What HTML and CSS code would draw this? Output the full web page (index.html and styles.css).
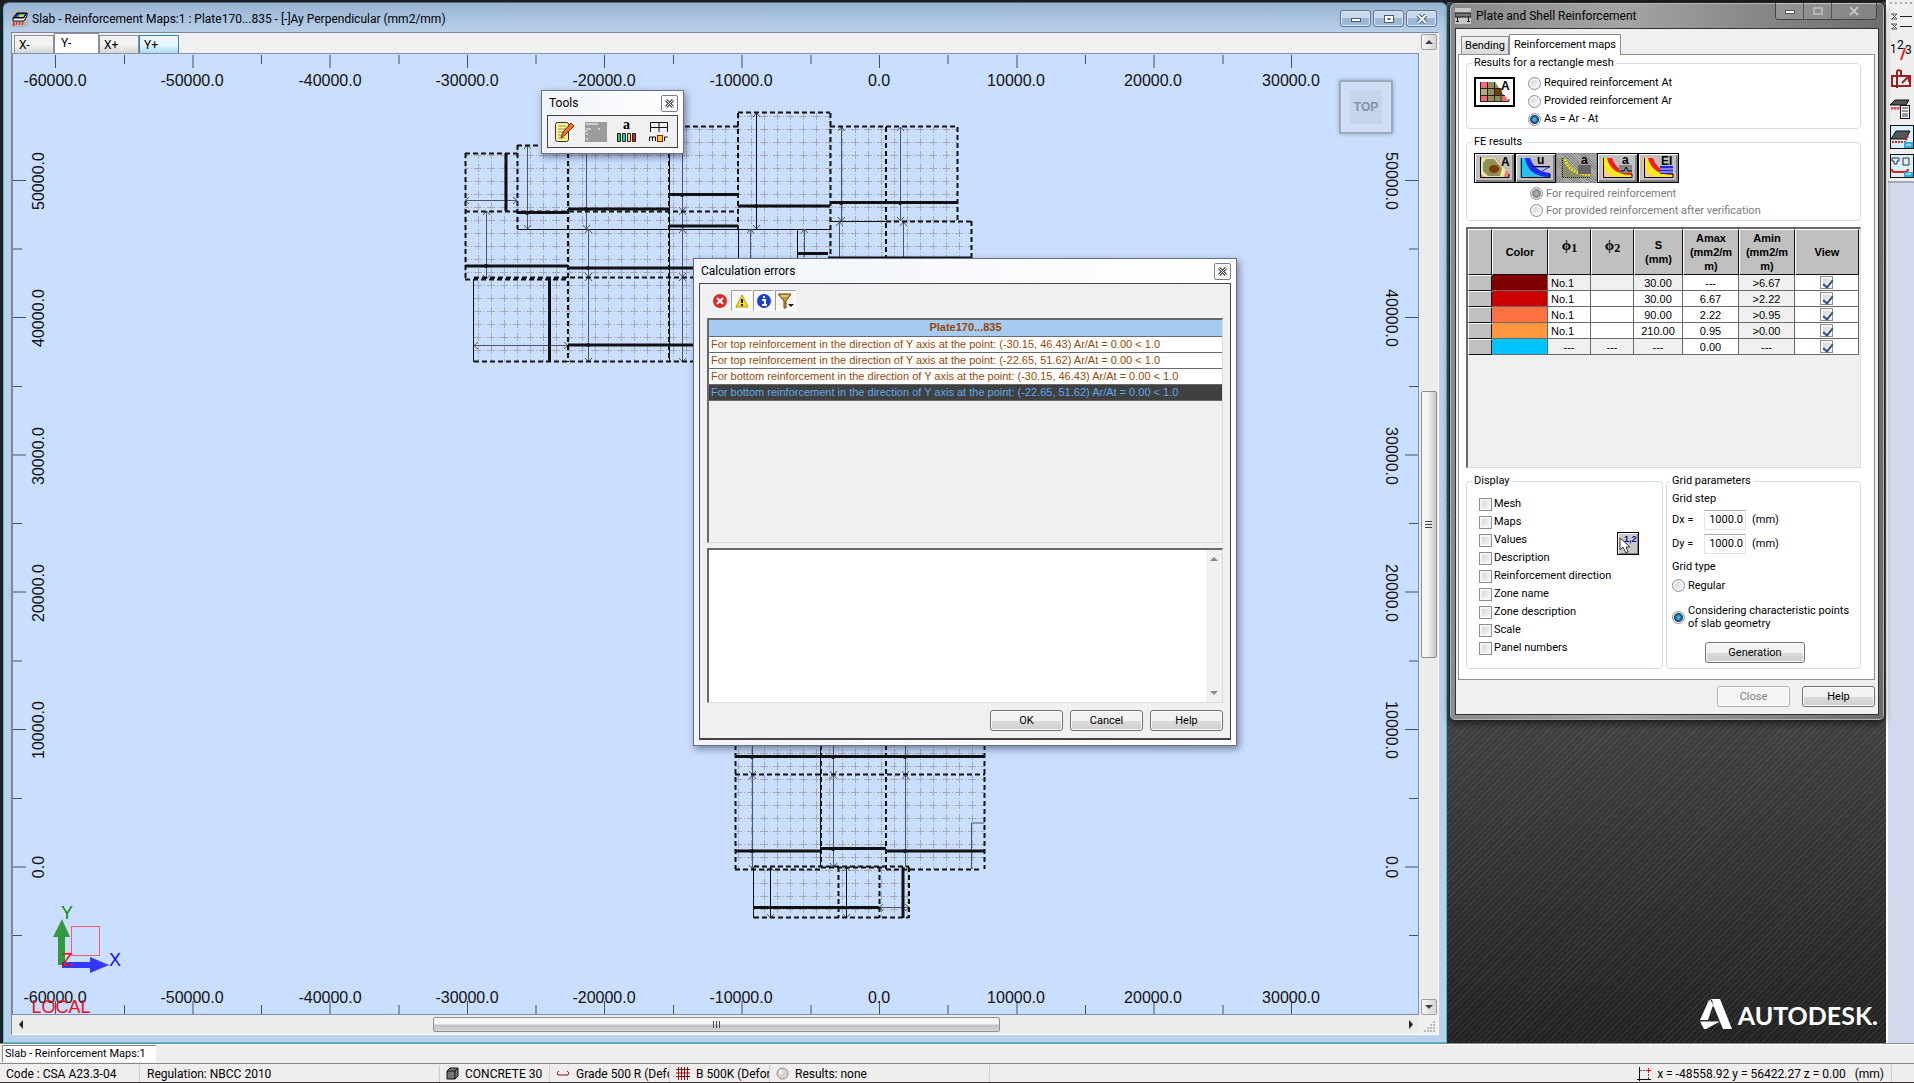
FILE: index.html
```html
<!DOCTYPE html>
<html lang="en">
<head>
<meta charset="utf-8">
<title>Slab - Reinforcement Maps</title>
<link rel="stylesheet" href="styles.css">
</head>
<body>
<main class="workspace">
  <section class="mdi" aria-label="Reinforcement map view">
    <header class="mdi-title">
      <svg class="mdi-icon" width="16" height="16" viewBox="0 0 16 16"><rect width="16" height="16" fill="#b9b4b4"/><path d="M5 2h10l-3 5H1z" fill="#2222e0" stroke="#000"/><path d="M7 3h6l-2 3H5z" fill="#1fd03a"/><path d="M8 4h4l-1 2H7z" fill="#f2e21e"/><path d="M1 7v3h11l3-5V2l-3 5z" fill="#fff" stroke="#000"/><path d="M2 11l-1 4M5 11l-1 3M8 11l-1 3M11 11l-1 3M3 13H1" stroke="#e01010"/></svg>
      <h1>Slab - Reinforcement Maps:1 : Plate170...835 - [-]Ay Perpendicular (mm2/mm)</h1>
      <div class="mdi-buttons">
        <button aria-label="Minimize"><svg width="12" height="10"><rect x="1.500" y="4.500" width="9" height="3" fill="#fff" stroke="#4a5a70"/></svg></button>
        <button aria-label="Maximize"><svg width="12" height="10"><rect x="1.500" y="1.500" width="9" height="7" fill="#fff" stroke="#4a5a70"/><rect x="4.500" y="4" width="3" height="2" fill="#4a5a70"/></svg></button>
        <button aria-label="Close view"><svg width="12" height="10"><path d="M2 1l8 8M10 1l-8 8" stroke="#4a5a70" stroke-width="4"/><path d="M2 1l8 8M10 1l-8 8" stroke="#fff" stroke-width="2"/></svg></button>
      </div>
    </header>
    <div class="mdi-body">
      <div class="view">
        <nav class="view-tabs">
          <button>X-</button><button class="active">Y-</button><button>X+</button><button class="hot">Y+</button>
        </nav>
        <div class="canvas">
          <svg class="drawing" width="100%" height="100%">
            <defs>
              <pattern id="mesh" width="13" height="13" patternUnits="userSpaceOnUse" x="4" y="6">
                <path d="M2 6.500h8M6.500 2v8M12 6.500h1M6.500 12v1" stroke="#a6a9b2" fill="none"/>
              </pattern>
            </defs>
            <g transform="translate(-13 -54)">
              <g fill="url(#mesh)">
                <path d="M465 153h52v-8h51v-18h170v-14h92v14h127v94h14v40H690v101H474v-83h-9z"/>
                <path d="M735 740h250v129h-76v49H754v-49h-19z"/>
              </g>
              <g class="thin">
                <path d="M517.500 229.500H830M669.500 140v222M473.500 279v83M738.500 229v30M797.500 229v30M820.500 745v122M753.500 867v51M830 221.500h56M756.500 113v116M770.500 867v51M846.500 867v51"/>
              </g>
              <g class="gray">
                <path d="M465 200.500h52M527.500 145v84M586.500 150v79M682.500 126v236M841.500 127v94M900.500 127v94M839.500 221v37M903.500 221v37M750.500 229v30M804.500 229v28M486.500 211v68M588.500 229v133M474 345.500h94M752.500 745v124M833.500 745v122M905.500 745v122M879 907.500h30M971.500 869v-46h13"/>
                <path d="M524 149l3.500-4 3.500 4M524 225l3.500 4 3.500-4M583 225l3.500 4 3.500-4M753 117l3.500-4 3.500 4M753 225l3.500 4 3.500-4M838 131l3.500-4 3.500 4M838 217l3.500 4 3.500-4M897 131l3.500-4 3.500 4M897 217l3.500 4 3.500-4M836 226l3.500-4 3.500 4M900 226l3.500-4 3.500 4M747 233l3.500-4 3.500 4M801 233l3.500-4 3.500 4M483 215l3.500-4 3.500 4M483 275l3.500 4 3.500-4M585 233l3.500-4 3.500 4M585 273l7 8M585 281l7-8M585 358l3.500 4 3.500-4M679 207l7 8M679 215l7-8M679 225l7 8M679 233l7-8M679 273l7 8M679 281l7-8M679 358l3.500 4 3.500-4M469 197l-4 3.500 4 3.500M513 197l4 3.500-4 3.500M478 342l-4 3.500 4 3.500M564 342l4 3.500-4 3.500M749 771l7 8M749 779l7-8M830 771l7 8M830 779l7-8M902 771l7 8M902 779l7-8M830 863l3.500 4 3.500-4M749 865l3.500 4 3.500-4M767 871l3.500-4 3.500 4M767 914l3.500 4 3.500-4M843 871l3.500-4 3.500 4M843 914l3.500 4 3.500-4M883 904l-4 3.500 4 3.500M905 904l4 3.500-4 3.500"/>
              </g>
              <g class="dashed">
                <path d="M465 153.500h52M465.500 153v126M517.500 145v84M517 145.500h51M568 145v217M465 211.500h273M465 279.500h103M474 277.500h219M474 361.500h219M669 145v217M669 126.500h69M738 113v116M738 112.500h92M830.500 113v145M830 126.500h127M957.500 127v94M886 127v131M886 221.500h85M971.500 221v37M735.500 745v124M735 869.500h86M984.500 745v124M886 745v124M735 774.500h250M821 867.500h65M886 869.500h95M754 866.500h155M754 917.500h155M838.500 867v51M879.500 867v51M909 867v51M821 745v122"/>
              </g>
              <g class="thick">
                <path d="M506 153v58M517 212.500h51M568 209h101M669 194.500h69M669 226h69M738 206h92M830 202.500h127M797 253.500h31M828 258h143M465 266h103M568 268h125M549.500 277v85M568 345h125M735 756.500h250M735 851h86M821 848.500h65M886 851h99M754 907.500h125M903 867v51"/>
              </g>
              <g class="dots">
                <circle cx="527" cy="213" r="2"/><circle cx="586" cy="209" r="2"/><circle cx="682" cy="195" r="2"/><circle cx="756" cy="206" r="2"/><circle cx="841" cy="203" r="2"/><circle cx="900" cy="203" r="2"/><circle cx="486" cy="266" r="2"/><circle cx="588" cy="268" r="2"/><circle cx="588" cy="345" r="2"/><circle cx="752" cy="757" r="2"/><circle cx="833" cy="757" r="2"/><circle cx="905" cy="757" r="2"/><circle cx="752" cy="851" r="2"/><circle cx="833" cy="849" r="2"/><circle cx="905" cy="851" r="2"/>
              </g>
            </g>
            <!-- top ruler -->
            <path class="tick" d="M42.500 1v13M180 1v13M317 1v13M454.500 1v13M591.500 1v13M729 1v13M866.500 1v13M1004 1v13M1141 1v13M1278.500 1v13M111.500 1v9M248.500 1v9M386 1v9M523 1v9M660.500 1v9M798 1v9M935 1v9M1072.500 1v9M1210 1v9"/>
            <g class="ruler">
              <text x="42" y="32">-60000.0</text><text x="179" y="32">-50000.0</text><text x="317" y="32">-40000.0</text><text x="454" y="32">-30000.0</text><text x="591" y="32">-20000.0</text><text x="728" y="32">-10000.0</text><text x="866" y="32">0.0</text><text x="1003" y="32">10000.0</text><text x="1140" y="32">20000.0</text><text x="1278" y="32">30000.0</text>
            </g>
            <!-- left ruler -->
            <path class="tick" d="M0 126.500h13M0 263.500h13M0 401h13M0 538h13M0 675.500h13M0 813h13M0 195h9M0 332.500h9M0 469.500h9M0 607h9M0 744.500h9M0 881.500h9"/>
            <g class="ruler">
              <text transform="translate(31 127) rotate(-90)">50000.0</text><text transform="translate(31 264) rotate(-90)">40000.0</text><text transform="translate(31 402) rotate(-90)">30000.0</text><text transform="translate(31 539) rotate(-90)">20000.0</text><text transform="translate(31 676) rotate(-90)">10000.0</text><text transform="translate(31 813) rotate(-90)">0.0</text>
            </g>
            <!-- right ruler -->
            <svg x="100%" overflow="visible">
              <path class="tick" d="M0 126.500h-13M0 263.500h-13M0 401h-13M0 538h-13M0 675.500h-13M0 813h-13M0 195h-9M0 332.500h-9M0 469.500h-9M0 607h-9M0 744.500h-9M0 881.500h-9"/>
              <g class="ruler">
                <text transform="translate(-32 127) rotate(90)">50000.0</text><text transform="translate(-32 264) rotate(90)">40000.0</text><text transform="translate(-32 402) rotate(90)">30000.0</text><text transform="translate(-32 539) rotate(90)">20000.0</text><text transform="translate(-32 676) rotate(90)">10000.0</text><text transform="translate(-32 813) rotate(90)">0.0</text>
              </g>
            </svg>
            <!-- bottom ruler and axes -->
            <svg y="100%" overflow="visible">
              <path class="tick" d="M42.500 0v-13M180 0v-13M317 0v-13M454.500 0v-13M591.500 0v-13M729 0v-13M866.500 0v-13M1004 0v-13M1141 0v-13M1278.500 0v-13M111.500 0v-9M248.500 0v-9M386 0v-9M523 0v-9M660.500 0v-9M798 0v-9M935 0v-9M1072.500 0v-9M1210 0v-9"/>
              <g class="ruler">
                <text x="42" y="-11">-60000.0</text><text x="179" y="-11">-50000.0</text><text x="317" y="-11">-40000.0</text><text x="454" y="-11">-30000.0</text><text x="591" y="-11">-20000.0</text><text x="728" y="-11">-10000.0</text><text x="866" y="-11">0.0</text><text x="1003" y="-11">10000.0</text><text x="1140" y="-11">20000.0</text><text x="1278" y="-11">30000.0</text>
              </g>
              <path d="M49-95l8 18h-5v28h-7v-28h-5z" fill="#329a3c"/>
              <path d="M49-52h28v-5l19 8-19 8v-5H49z" fill="#3238ff"/>
              <rect x="58.500" y="-87.500" width="28" height="29" fill="none" stroke="#ff5a6a"/>
              <g class="axis"><text x="54" y="-95" fill="#0a8a0a">Y</text><text x="102" y="-48" fill="#1010ff">X</text><text x="54" y="-48" fill="#ff0000">Z</text></g>
              <text class="local" x="48" y="-1">LOCAL</text>
            </svg>
          </svg>
          <button class="cube"><span>TOP</span></button>
        </div>
      </div>
      <div class="vscroll">
        <button aria-label="Scroll up"><svg width="8" height="6"><path d="M0 5l4-4 4 4z" fill="#444"/></svg></button>
        <div class="vthumb"><svg width="9" height="9"><path d="M1 1.500h7M1 4.500h7M1 7.500h7" stroke="#444"/></svg></div>
        <button aria-label="Scroll down"><svg width="8" height="6"><path d="M0 1l4 4 4-4z" fill="#444"/></svg></button>
      </div>
      <div class="hscroll">
        <svg width="16" height="9"><path d="M11 0v9L7 4.500z" fill="#222"/></svg>
        <div class="hthumb"><svg width="9" height="9"><path d="M1.500 1v7M4.500 1v7M7.500 1v7" stroke="#444"/></svg></div>
        <svg width="16" height="9"><path d="M6 0v9l4-4.500z" fill="#222"/></svg>
      </div>
      <div class="grip"><svg width="12" height="12"><path d="M9 2h2M6 5h2M9 5h2M3 8h2M6 8h2M9 8h2M0 11h2M3 11h2M6 11h2M9 11h2" stroke="#b8b8b8" stroke-width="2"/></svg></div>
    </div>
  </section>

  <section class="backdrop">
    <div class="brand">
      <svg width="32" height="31" viewBox="0 0 32 31"><path d="M10 0h10l12 30h-9l-9-22-2-7z" fill="#fff"/><path d="M9 1l4 5-5 15H0z" fill="#fff"/><path d="M0 22.500h20L6 30H4z" fill="#fff"/><path d="M10 1l4 7" stroke="#fff"/></svg>
      <span>AUTODESK.</span>
    </div>
  </section>

  <aside class="side">
    <div class="side-tools">
      <svg class="side-grip" width="24" height="2"><path d="M0 1h24" stroke="#aaa" stroke-width="2" stroke-dasharray="2 3"/></svg>
      <button aria-label="Supports"><svg width="24" height="24"><path d="M10 7.500h12M10 17.500h12" stroke="#222"/><path d="M1 5h6M1 10h6M2 5l5 5M7 5l-5 5M1 15h6M1 20h6M2 15l5 5M7 15l-5 5" stroke="#555"/></svg></button>
      <button aria-label="Numbering"><svg width="24" height="24"><path d="M11 22l4-12" stroke="#ee1c1c" stroke-width="2"/><g class="side-num"><text x="0" y="15">1</text><text x="7" y="11">2</text><text x="15" y="16">3</text></g></svg></button>
      <button aria-label="Openings"><svg width="24" height="24"><path d="M2 9h18v10H2zM7 21V5q0-3 4-1v4M12 16l6-6M13 9h6v6" fill="none" stroke="#9c2020" stroke-width="2"/></svg></button>
      <button aria-label="Plate list"><svg width="24" height="24"><path d="M5 4h14l-3 5H0z" fill="#555" stroke="#111"/><path d="M1 12h10M2 14v-3M5 14v-3M8 14v-3" stroke="#e02020"/><rect x="10.500" y="9.500" width="9" height="13" fill="#fff" stroke="#111"/><path d="M12 12h6M12 15h6M12 18h6M12 20h6" stroke="#234"/></svg></button>
      <button aria-label="Plate view" class="framed"><svg width="24" height="24"><path d="M6 6h14l-4 8H1z" fill="#555" stroke="#111"/><path d="M2 17h13l3-6" stroke="#e02020" stroke-width="2" stroke-dasharray="2 1" fill="none"/><rect x="14" y="17" width="9" height="6" fill="#2ab0dd"/><path d="M16 20h5" stroke="#fff"/></svg></button>
      <button aria-label="Section view" class="framed"><svg width="24" height="24"><path d="M2 4h7v3H7v3H4V7H2zM13 4h6v7h-6z" fill="none" stroke="#333"/><path d="M2 15q0 3 2 3h11q3 0 3-3" fill="none" stroke="#e02020" stroke-width="2"/><rect x="14" y="18" width="9" height="5" fill="#2ab0dd"/><path d="M16 20h5" stroke="#fff"/></svg></button>
    </div>
  </aside>

  <section class="glass tools">
    <header class="glass-title"><h2>Tools</h2><button class="xbox" aria-label="Close tools"><svg width="9" height="9"><path d="M1 1l7 7M8 1l-7 7" stroke="#445" stroke-width="3"/><path d="M1 1l7 7M8 1l-7 7" stroke="#fff"/></svg></button></header>
    <div class="tools-row">
      <button aria-label="Edit note"><svg width="22" height="22"><rect x="2.500" y="1.500" width="13" height="19" rx="2" fill="#fff48a" stroke="#333"/><path d="M5 5h8M5 8h8M5 11h6M5 14h5M5 17h7" stroke="#888"/><path d="M8 17l2-6 8-9 3 3-9 9z" fill="#ee7420" stroke="#7a2a10"/></svg></button>
      <button aria-label="Scale"><svg width="22" height="22"><rect x="0" y="1" width="22" height="20" fill="#9c9c9c"/><path d="M1 3h12M1 8h5M1 9v2M1 13h2M1 18h2M13 8h2" stroke="#fff"/></svg></button>
      <button aria-label="Attributes"><svg width="22" height="22" overflow="visible"><text x="7" y="8" class="glyph serif">a</text><path d="M1.500 12.500h3v8h-3z" fill="#1ed43a" stroke="#222"/><path d="M6.500 12.500h3v8h-3z" fill="#28c8e8" stroke="#222"/><path d="M11.500 12.500h3v8h-3z" fill="#f0e020" stroke="#222"/><path d="M16.500 12.500h3v8h-3z" fill="#e81c1c" stroke="#222"/></svg></button>
      <button aria-label="Tables"><svg width="22" height="22"><path d="M2.500 11V1.500h17V11M11 1v10M2 6.500h17" stroke="#111" fill="none"/><path d="M1.500 20v-4h3v4M4.500 16h3v4M16.500 20v-4h3" stroke="#111" fill="none"/><rect x="9.500" y="14.500" width="5" height="6" fill="#f0d020" stroke="#a01010"/></svg></button>
    </div>
  </section>

  <section class="glass errors" role="dialog" aria-label="Calculation errors">
    <header class="glass-title"><h2>Calculation errors</h2><button class="xbox" aria-label="Close errors"><svg width="9" height="9"><path d="M1 1l7 7M8 1l-7 7" stroke="#445" stroke-width="3"/><path d="M1 1l7 7M8 1l-7 7" stroke="#fff"/></svg></button></header>
    <div class="errors-body">
      <div class="filters">
        <button aria-label="Errors"><svg width="16" height="16"><circle cx="8" cy="8" r="7" fill="#dc2a2a"/><path d="M5 5l6 6M11 5l-6 6" stroke="#fff" stroke-width="2"/></svg></button>
        <button class="on" aria-label="Warnings"><svg width="16" height="16"><path d="M8 2l6 12H2z" fill="#ffe600" stroke="#a89a00"/><path d="M8 6v4M8 11v2" stroke="#111" stroke-width="2"/></svg></button>
        <button class="on" aria-label="Information"><svg width="16" height="16"><circle cx="8" cy="8" r="7" fill="#1c3fd0"/><path d="M7 4h2M6 7h3v5M6 12h5" stroke="#fff" stroke-width="2" fill="none"/></svg></button>
        <button class="on" aria-label="Filter"><svg width="18" height="16"><path d="M1 1h13L9 8v7H7V8z" fill="#c99a3c" stroke="#6b4a10"/><path d="M4 3h7" stroke="#fff0b0"/><path d="M11 11h6l-3 3z" fill="#111"/></svg></button>
      </div>
      <div class="list">
        <table>
          <thead><tr><th>Plate170...835</th></tr></thead>
          <tbody>
            <tr><td>For top reinforcement in the direction of Y axis at the point: (-30.15, 46.43) Ar/At = 0.00 &lt; 1.0</td></tr>
            <tr><td>For top reinforcement in the direction of Y axis at the point: (-22.65, 51.62) Ar/At = 0.00 &lt; 1.0</td></tr>
            <tr><td>For bottom reinforcement in the direction of Y axis at the point: (-30.15, 46.43) Ar/At = 0.00 &lt; 1.0</td></tr>
            <tr class="selected"><td>For bottom reinforcement in the direction of Y axis at the point: (-22.65, 51.62) Ar/At = 0.00 &lt; 1.0</td></tr>
          </tbody>
        </table>
      </div>
      <div class="memo">
        <textarea aria-label="Details"></textarea>
        <div class="memo-scroll"><svg width="8" height="6"><path d="M0 5l4-4 4 4z" fill="#888"/></svg><svg width="8" height="6"><path d="M0 1l4 4 4-4z" fill="#888"/></svg></div>
      </div>
      <footer><button class="btn">OK</button><button class="btn">Cancel</button><button class="btn">Help</button></footer>
    </div>
  </section>

  <section class="plate" role="dialog" aria-label="Plate and Shell Reinforcement">
    <header class="plate-title">
      <svg width="16" height="16"><rect width="16" height="16" fill="#c8c8c8"/><path d="M0 5h16v4H0z" fill="#777" stroke="#111"/><path d="M2.500 9v5M13.500 9v5M1 13.500h3M12 13.500h3" stroke="#111"/></svg>
      <h2>Plate and Shell Reinforcement</h2>
      <div class="plate-buttons">
        <button aria-label="Minimize panel"><svg width="12" height="10"><rect x="1.500" y="4.500" width="9" height="3" fill="#fff" stroke="#555"/></svg></button>
        <button aria-label="Maximize panel"><svg width="12" height="10"><rect x="2" y="2" width="8" height="6" fill="none" stroke="#b4b4b4" stroke-width="2"/></svg></button>
        <button class="wide" aria-label="Close panel"><svg width="12" height="10"><path d="M2 1l8 8M10 1l-8 8" stroke="#c4c4c4" stroke-width="2"/></svg></button>
      </div>
    </header>
    <div class="client">
      <nav class="tabs"><button>Bending</button><button class="active">Reinforcement maps</button></nav>
      <div class="page">
        <fieldset class="mesh-results">
          <legend>Results for a rectangle mesh</legend>
          <button class="map pressed" aria-label="Area map"><svg width="37" height="26"><path d="M4 3h15l14 20H4z" fill="#8f8f5c"/><path d="M4 3h7v6H4zM4 17h7v6H4zM25 17h4l4 6h-8z" fill="#f6666c"/><path d="M4 9h7v8H4z" fill="#b9a878"/><path d="M18 9h7v8h-7z" fill="#7a3c00"/><path d="M4.500 3v19.500H33V20M11.500 3v20M18.500 3v20M25 9v14M4 9.500h20M4 16.500h25" stroke="#222" fill="none"/><text x="25" y="11" class="glyph">A</text></svg></button>
          <div class="radios">
            <label><input type="radio" name="mesh">Required reinforcement At</label>
            <label><input type="radio" name="mesh">Provided reinforcement Ar</label>
            <label><input type="radio" name="mesh" checked>As = Ar - At</label>
          </div>
        </fieldset>
        <fieldset class="fe-results">
          <legend>FE results</legend>
          <div class="maps">
            <button class="map" aria-label="Reinforcement area"><svg width="37" height="26"><path d="M4 3h16l13 15v5H4z" fill="#f08080"/><path d="M6 3h13l11 12-3 8H9L4 18V8z" fill="#f0e69a"/><path d="M10 4h8l8 9-2 8H12l-5-5V8z" fill="#8f8f5c"/><ellipse cx="18" cy="14" rx="5" ry="4" fill="#7a3c00"/><path d="M4.500 2v20.500H33V19" stroke="#000" fill="none"/><text x="25" y="11" class="glyph">A</text></svg></button>
            <button class="map" aria-label="Displacements"><svg width="37" height="26"><path d="M3 3h7q4 14 23 16v4H3z" fill="#28c0f0"/><path d="M8 3h5q5 14 20 15v4q-22 0-25-19z" fill="#1c2cf0"/><path d="M4.500 3v19.500H33V19" stroke="#000" fill="none"/><path d="M15 12h18M16 12l8 5 8-5" stroke="#1c2cf0" fill="none"/><path d="M15 11.500h18" stroke="#000"/><text x="20" y="9" class="glyph">u</text></svg></button>
            <button class="map off" aria-label="Deflection a" disabled><svg width="37" height="26"><path d="M3 3h6q4 15 24 16v4H3z" fill="#8c8c6c"/><path d="M7 4q4 15 26 16" stroke="#e8e020" stroke-width="3" stroke-dasharray="2 1" fill="none"/><rect x="20" y="10" width="13" height="9" fill="#666"/><path d="M4.500 3v19.500H33" stroke="#222" stroke-dasharray="1 1" fill="none"/><text x="23" y="9" class="glyph">a</text></svg></button>
            <button class="map" aria-label="Cracking"><svg width="37" height="26"><path d="M3 3h5q6 17 25 16v4H3z" fill="#ffe820"/><path d="M3 8q3 12 15 15H3z" fill="#f8c8a0"/><path d="M8 3h5q5 14 20 15v2Q12 20 8 3z" fill="#f02020"/><rect x="20" y="10" width="13" height="8" fill="#888"/><path d="M21 16h4l2-4 2 4h4" stroke="#111" fill="none"/><path d="M4.500 3v19.500H33V19" stroke="#000" fill="none"/><text x="23" y="9" class="glyph">a</text></svg></button>
            <button class="map" aria-label="Stiffness"><svg width="37" height="26"><path d="M3 3h5q6 17 25 16v4H3z" fill="#ffe820"/><path d="M3 8q3 12 15 15H3z" fill="#f8c8a0"/><path d="M8 3h5q5 14 20 15v2Q12 20 8 3z" fill="#f02020"/><rect x="20" y="11" width="13" height="8" fill="#2028d8"/><path d="M20 14h13M20 17h13" stroke="#ddd"/><path d="M4.500 3v19.500H33V19" stroke="#000" fill="none"/><text x="21" y="10" class="glyph">EI</text></svg></button>
          </div>
          <div class="radios">
            <label class="dim"><input type="radio" name="fe" checked disabled>For required reinforcement</label>
            <label class="dim"><input type="radio" name="fe" disabled>For provided reinforcement after verification</label>
          </div>
        </fieldset>
        <div class="scale">
          <table>
            <colgroup><col class="c-row"><col class="c-color"><col class="c-phi"><col class="c-phi"><col class="c-s"><col class="c-a"><col class="c-a"><col></colgroup>
            <thead><tr><th></th><th>Color</th><th class="phi">ϕ<span>1</span></th><th class="phi">ϕ<span>2</span></th><th>S<br>(mm)</th><th>Amax<br>(mm2/m<br>m)</th><th>Amin<br>(mm2/m<br>m)</th><th>View</th></tr></thead>
            <tbody>
              <tr><th></th><td class="darkred"></td><td class="left ro">No.1</td><td class="ro"></td><td class="ro">30.00</td><td>---</td><td class="ro">&gt;6.67</td><td><input type="checkbox" aria-label="View range 1" checked></td></tr>
              <tr><th></th><td class="red"></td><td class="left">No.1</td><td></td><td>30.00</td><td>6.67</td><td class="ro">&gt;2.22</td><td><input type="checkbox" aria-label="View range 2" checked></td></tr>
              <tr><th></th><td class="coral"></td><td class="left">No.1</td><td></td><td>90.00</td><td>2.22</td><td class="ro">&gt;0.95</td><td><input type="checkbox" aria-label="View range 3" checked></td></tr>
              <tr><th></th><td class="orange"></td><td class="left">No.1</td><td></td><td>210.00</td><td>0.95</td><td class="ro">&gt;0.00</td><td><input type="checkbox" aria-label="View range 4" checked></td></tr>
              <tr><th></th><td class="sky"></td><td class="ro">---</td><td class="ro">---</td><td class="ro">---</td><td>0.00</td><td class="ro">---</td><td><input type="checkbox" aria-label="View range 5" checked></td></tr>
            </tbody>
          </table>
        </div>
        <div class="bottom">
          <fieldset class="display">
            <legend>Display</legend>
            <div class="checks">
              <label><input type="checkbox">Mesh</label>
              <label><input type="checkbox">Maps</label>
              <label><input type="checkbox">Values</label>
              <label><input type="checkbox">Description</label>
              <label><input type="checkbox">Reinforcement direction</label>
              <label><input type="checkbox">Zone name</label>
              <label><input type="checkbox">Zone description</label>
              <label><input type="checkbox">Scale</label>
              <label><input type="checkbox">Panel numbers</label>
            </div>
            <button class="pick" aria-label="Pick values"><svg width="20" height="20"><path d="M2 4v12l3-3 3 6 2-1-2-5h4z" fill="#fff" stroke="#333"/><text x="6" y="8">1,2</text></svg></button>
          </fieldset>
          <fieldset class="grid-params">
            <legend>Grid parameters</legend>
            <p>Grid step</p>
            <div class="step"><label for="dx">Dx =</label><input id="dx" type="text" value="1000.0"><span>(mm)</span></div>
            <div class="step"><label for="dy">Dy =</label><input id="dy" type="text" value="1000.0"><span>(mm)</span></div>
            <p>Grid type</p>
            <label class="kind"><input type="radio" name="grid">Regular</label>
            <label class="kind"><input type="radio" name="grid" checked><span>Considering characteristic points<br>of slab geometry</span></label>
            <button class="btn generate">Generation</button>
          </fieldset>
        </div>
      </div>
      <footer><button class="btn" disabled>Close</button><button class="btn">Help</button></footer>
    </div>
  </section>
</main>

<nav class="windows"><button>Slab - Reinforcement Maps:1</button></nav>
<footer class="status">
  <span class="s-code">Code : CSA A23.3-04</span>
  <span class="s-reg">Regulation: NBCC 2010</span>
  <span class="s-conc"><svg width="13" height="13"><path d="M1 4l3-3h8v8l-3 3H1z" fill="#777" stroke="#111"/><path d="M1 4h8v8M9 4l3-3" stroke="#111" fill="none"/></svg>CONCRETE 30</span>
  <span class="s-grade"><svg width="14" height="13"><path d="M3 4Q0 5 2 8h10q2-3-1-4" stroke="#8c1010" fill="none"/></svg>Grade 500 R (Defo</span>
  <span class="s-grade"><svg width="14" height="13"><path d="M2.500 0v13M5.500 0v13M8.500 0v13M11.500 0v13M0 2.500h14M0 6h14M0 9.500h14" stroke="#8c1010"/></svg>B 500K (Deforr</span>
  <span class="s-res"><svg width="13" height="13"><circle cx="6.500" cy="6.500" r="5.500" fill="#d4d4d4" stroke="#8a9090"/><circle cx="5" cy="5" r="2" fill="#f2f2f2"/></svg>Results: none</span>
  <span class="s-coord"><svg width="14" height="14"><path d="M2.500 0v14M0 12.500h14" stroke="#111"/><path d="M3 3.500h8M11.500 4v8" stroke="#555" stroke-dasharray="2 1"/><path d="M9 3.500h5M11.500 1v5" stroke="#f01010"/></svg>x = -48558.92 y = 56422.27 z = 0.00 &nbsp; (mm)</span>
</footer>
</body>
</html>
```
FILE: styles.css
```css
* { box-sizing: border-box; }
html, body { margin: 0; height: 100%; }
body {
  display: flex;
  flex-direction: column;
  overflow: hidden;
  font: 11px/14px Roboto, Tahoma, sans-serif;
  color: #000;
  background: #1c1c1c;
}
h1, h2, p { margin: 0; font-weight: normal; }
button { font: inherit; color: inherit; padding: 0; margin: 0; }
button, .mdi-title, .plate-title { display: flex; align-items: center; }
button { justify-content: center; }
svg { display: block; flex: none; }

.workspace { position: relative; flex: 1; display: flex; min-height: 0; padding-top: 2px; background: #1e1e22; }

/* map window */
.mdi {
  flex: 1;
  display: flex;
  flex-direction: column;
  min-width: 0;
  margin-left: 3px;
  padding: 0 7px 7px;
  border: 1px solid #35c3de;
  border-top-color: #5a6a80;
  border-radius: 6px 6px 0 0;
  background: linear-gradient(#98b3d3, #b9d1ea 30px);
}
.mdi-title { height: 29px; gap: 4px; padding: 2px 2px 0 1px; }
.mdi-title h1 { flex: 1; font: 12px/16px Roboto, "Segoe UI", sans-serif; white-space: nowrap; }
.mdi-buttons { display: flex; gap: 2px; }
.mdi-buttons button { width: 31px; height: 17px; border: 1px solid #5f7593; border-radius: 3px; background: linear-gradient(#c8daee 50%, #9db8d6 50%); box-shadow: inset 0 0 0 1px #dbe8f6; }
.mdi-body {
  flex: 1;
  display: grid;
  grid-template-columns: minmax(0, 1fr) 19px;
  grid-template-rows: minmax(0, 1fr) 19px;
  border: 1px solid #7d8797;
  border-right-color: #fff;
  border-bottom-color: #fff;
  background: #f0f0f0;
  min-height: 0;
}
.view { display: flex; flex-direction: column; min-height: 0; }
.view-tabs { display: flex; align-items: flex-end; height: 21px; padding-left: 2px; border-bottom: 1px solid #8a93a3; font: 12px/16px Roboto, "Segoe UI", sans-serif; }
.view-tabs button { justify-content: flex-start; width: 40px; height: 18px; padding-left: 4px; border: 1px solid #8c8e94; border-bottom: 0; background: linear-gradient(#f2f2f2 50%, #d6d6d6); }
.view-tabs .active { width: 45px; height: 20px; padding: 0 0 2px 6px; background: #fff; }
.view-tabs .hot { border-color: #3c7fb1; background: linear-gradient(#eaf6fd 50%, #a9dbf5); }
.canvas { position: relative; flex: 1; min-height: 0; border-right: 1px solid #7d8fb0; border-bottom: 1px solid #7d8fb0; border-left: 1px solid #7d8797; background: #cadeff; }
.drawing { position: absolute; inset: 0; overflow: hidden; }
.drawing path { fill: none; }
.drawing path[fill] { fill: revert-layer; }
.drawing g[fill] path { fill: inherit; }
.thin { stroke: #111; }
.gray { stroke: #4d5563; }
.dashed { stroke: #111; stroke-width: 2; stroke-dasharray: 5 3; }
.thick { stroke: #111; stroke-width: 3; }
.dots { fill: #111; }
.tick { stroke: #445066; }
.ruler { font: 16px "Liberation Sans", Arial, sans-serif; text-anchor: middle; fill: #111; }
.axis { font: 18px "Liberation Sans", Arial, sans-serif; text-anchor: middle; }
.local { font: 18px "Liberation Sans", Arial, sans-serif; text-anchor: middle; fill: #f01020; }
.cube { position: absolute; top: 26px; right: 25px; width: 54px; height: 54px; border: 2px solid #9aaabb; border-radius: 2px; background: #cfdef4; box-shadow: 0 0 4px #8fa2bd; }
.cube span { padding: 9px 4px; background: #c4d4ea; color: #8593a8; font: bold 12px/16px "Liberation Sans", sans-serif; }

.vscroll { display: flex; flex-direction: column; align-items: center; padding: 1px 1px 0; background: #ececec; }
.vscroll button { width: 16px; height: 16px; border: 1px solid #a0a0a0; border-radius: 2px; background: linear-gradient(90deg, #f6f6f6, #d4d4d4); }
.vscroll button:last-child { margin-top: auto; }
.vthumb, .hthumb { display: flex; align-items: center; justify-content: center; border: 1px solid #8f8f93; border-radius: 2px; }
.vthumb { width: 16px; height: 267px; margin-top: 341px; background: linear-gradient(90deg, #f5f5f5 40%, #c6c8cc); }
.hscroll { display: flex; align-items: center; background: #ececec; }
.hthumb { width: 567px; height: 15px; margin: 0 auto 0 405px; background: linear-gradient(#f5f5f5 45%, #c2c4c8 55%, #d2d4d8); }
.grip { display: flex; align-items: flex-end; justify-content: flex-end; padding: 2px; }

/* dark desktop and right toolbar */
.backdrop {
  display: flex;
  align-items: flex-end;
  justify-content: flex-end;
  width: 439px;
  padding: 0 8px 13px;
  background: repeating-linear-gradient(135deg, transparent 0 2px, rgba(255,255,255,.08) 2px 3px, transparent 3px 4px), linear-gradient(#47494b 60%, #222);
}
.brand { display: flex; align-items: center; gap: 6px; color: #fff; font: bold 25px/30px Lato, sans-serif; }
.side { width: 28px; margin-top: -2px; border-left: 2px solid #fff; background: #d3d9ec; }
.side-tools { display: flex; flex-direction: column; align-items: center; gap: 5px; height: 183px; padding: 2px 0 0 2px; border-bottom: 2px solid #a8a8b0; background: #f0eeee; }
.side-tools button { width: 24px; height: 24px; border: 0; background: none; }
.side-tools .framed { border: 1px solid #111; background: #d8f0fa; overflow: hidden; }
.side-num { font: 12px Roboto, sans-serif; }

/* floating glass windows */
.glass { position: absolute; border: 1px solid #6b727c; background: linear-gradient(90deg, #f0f4fa, #fff); box-shadow: 2px 3px 7px rgba(40,50,80,.55); }
.glass-title { display: flex; align-items: center; justify-content: space-between; height: 24px; padding: 0 0 0 2px; }
.glass-title h2 { font: 12px/16px Roboto, "Segoe UI", sans-serif; }
.xbox { width: 17px; height: 17px; border: 1px solid #7a7f88; border-radius: 2px; background: #fdfdfd; }
.tools { left: 541px; top: 90px; width: 143px; padding: 0 5px 5px; }
.tools-row { display: flex; align-items: center; justify-content: space-around; height: 33px; padding-right: 2px; border: 1px solid #444; background: #f0f0f0; }
.tools-row button { width: 24px; height: 24px; border: 0; background: none; }
.glyph { font: bold 12px "Liberation Sans", sans-serif; fill: #000; }
.glyph.serif { font-family: "Liberation Serif", serif; font-size: 14px; }
.errors { left: 693px; top: 258px; width: 544px; padding: 0 5px 5px; }
.errors-body { padding: 6px 7px 7px; border: 1px solid #444; border-bottom-width: 2px; background: #f0f0f0; }
.filters { display: flex; gap: 1px; padding-left: 2px; }
.filters button { width: 21px; height: 21px; border: 0; background: none; }
.filters .on { border: 1px solid #a0a0a0; border-right-color: #fff; border-bottom-color: #fff; background: #f8f8f8; }
.list { height: 225px; margin-top: 7px; border: 2px solid #696969; border-right: 1px solid #dcdcdc; border-bottom: 1px solid #dcdcdc; }
.list table { width: 100%; border-collapse: collapse; font: 11px/15px "Liberation Sans", Arial, sans-serif; color: #974806; }
.list th, .list td { height: 16px; padding: 0 2px; border-bottom: 1px solid #696969; text-align: left; white-space: nowrap; background: #fff; }
.list th { text-align: center; background: #a6caf0; }
.list .selected td { background: #404040; color: #5ea8ec; }
.memo { display: flex; height: 155px; margin-top: 5px; border: 2px solid #696969; border-right: 1px solid #dcdcdc; border-bottom: 1px solid #dcdcdc; background: #fff; }
.memo textarea { flex: 1; resize: none; border: 0; padding: 2px; background: #fff; }
.memo-scroll { display: flex; flex-direction: column; justify-content: space-between; align-items: center; width: 16px; padding: 6px 0; background: #f0f0f0; }
footer { display: flex; justify-content: flex-end; }
.errors-body footer { gap: 7px; margin-top: 7px; }
.btn { width: 73px; height: 21px; border: 1px solid #707070; border-radius: 3px; background: linear-gradient(#f2f2f2 50%, #dcdcdc 50%, #cfcfcf); box-shadow: inset 0 0 0 1px #fcfcfc; }
.btn:disabled { border-color: #adb2b5; background: #f4f4f4; color: #838383; }

/* plate reinforcement panel */
.plate { position: absolute; right: 29px; top: 2px; width: 436px; padding: 0 5px 5px; border: 1px solid #222; border-radius: 6px; background: linear-gradient(90deg, #8a8a8a, #a4a4a4 40%, #6c6c6c); box-shadow: inset 0 0 0 1px #b4b4b4, 0 3px 6px rgba(0,0,0,.5); }
.plate-title { height: 25px; gap: 5px; }
.plate-title h2 { flex: 1; font: 12px/16px Roboto, "Segoe UI", sans-serif; }
.plate-buttons { display: flex; align-self: flex-start; margin-right: 2px; border: 1px solid #444; border-top: 0; border-radius: 0 0 4px 4px; }
.plate-buttons button { width: 28px; height: 16px; border: 0; border-right: 1px solid #555; background: rgba(255,255,255,.15); }
.plate-buttons .wide { width: 44px; border-right: 0; }
.client { padding: 5px 3px 7px 2px; border: 1px solid #333; background: #f0f0f0; }
.tabs { display: flex; align-items: flex-end; height: 20px; padding-left: 3px; }
.tabs button { width: 48px; height: 18px; border: 1px solid #8c8e94; border-bottom: 0; background: linear-gradient(#f2f2f2, #d8d8d8); }
.tabs .active { width: 112px; height: 21px; margin-bottom: -1px; background: #fff; z-index: 1; }
.page { padding: 1px 13px 10px 7px; border: 1px solid #8c8e94; background: #fff; }
fieldset { min-width: 0; margin: 0; padding: 0; border: 1px solid #d0dce6; border-radius: 4px; }
legend { margin-left: -2px; padding: 0 2px; height: 14px; }
.mesh-results { display: flex; padding: 4px 7px 0; gap: 13px; }
.mesh-results .map { margin-top: 3px; }
.radios label, .checks label, .kind { display: flex; align-items: center; }
.radios label { height: 18px; gap: 3px; }
.radios .dim { color: #7a7a7a; }
.map { width: 41px; height: 30px; border: 1px solid #000; background: #c0c0c0; box-shadow: inset 1px 1px #fff, inset -2px -2px #808080; }
.pressed { background: #fff; box-shadow: inset 0 0 0 1px #000; }
.off { border-color: #888; background: repeating-linear-gradient(45deg, #8a8a8a 0 1px, #b0b0b0 1px 2px); box-shadow: none; }
.fe-results { margin-top: 6px; padding: 4px 7px 1px; }
.fe-results .radios { margin: 2px 0 0 56px; }
.fe-results .radios label { height: 17px; }
.maps { display: flex; }
input[type=radio], input[type=checkbox] { appearance: none; flex: none; width: 13px; height: 13px; margin: 0; border: 1px solid #8e8f8f; background: linear-gradient(135deg, #c8ccd2, #fff); box-shadow: inset 0 0 0 2px #f4f4f4; }
input[type=radio] { border-radius: 50%; }
input[type=radio]:checked { background: radial-gradient(circle, #3fb4e4 0 1px, #123f66 4px, #eee 5px); box-shadow: none; }
input[type=radio]:disabled:checked { background: radial-gradient(circle, #aaa 0 1px, #888 4px, #eee 5px); }
.scale { height: 241px; margin-top: 6px; border: 2px solid #696969; border-right: 1px solid #dcdcdc; border-bottom: 1px solid #dcdcdc; background: #f0f0f0; }
.scale table { width: 391px; table-layout: fixed; border-collapse: separate; border-spacing: 0; font: 11px/14px "Liberation Sans", Arial, sans-serif; }
.c-row { width: 24px; } .c-color { width: 56px; } .c-phi { width: 43px; } .c-s { width: 49px; } .c-a { width: 56px; }
.scale th, .scale td { padding: 0; text-align: center; }
.scale td { height: 16px; border-right: 1px solid #696969; border-bottom: 1px solid #696969; background: #fff; }
.scale .ro { background: #f0f0f0; }
.scale .left { text-align: left; padding-left: 3px; }
.scale th { border: 1px solid #fff; border-right-color: #111; border-bottom-color: #111; background: #c0c0c0; }
.scale thead th { height: 46px; white-space: nowrap; }
.scale .phi { padding-bottom: 12px; font: bold 15px/16px "Liberation Serif", serif; }
.phi span { font-size: 12px; vertical-align: -2px; }
.scale .darkred { background: #800000; } .scale .red { background: #cc0000; } .scale .coral { background: #ff7043; } .scale .orange { background: #ff9640; } .scale .sky { background: #00c4ff; }
.scale input[type=checkbox] { display: block; margin: 1px auto; }
input[type=checkbox]:checked { position: relative; }
input[type=checkbox]:checked::after { content: ""; position: absolute; left: 4px; top: 1px; width: 4px; height: 8px; border: solid #3b4f94; border-width: 0 2px 2px 0; transform: rotate(40deg); }
.bottom { display: grid; grid-template-columns: 197px 1fr; gap: 3px; margin-top: 6px; }
.display { display: flex; justify-content: space-between; padding: 7px 23px 11px 12px; }
.display legend { margin-left: -7px; }
.checks label { height: 18px; gap: 2px; white-space: nowrap; }
.pick { width: 22px; height: 23px; margin-top: 37px; border: 1px solid #000; background: #c8c8c8; box-shadow: inset 1px 1px #fff, inset -1px -1px #808080; }
.pick text { font: bold 9px "Liberation Sans", sans-serif; fill: #10108c; }
.grid-params { padding: 4px 5px 0; white-space: nowrap; }
.step { display: flex; align-items: center; margin-top: 3px; height: 21px; }
.step label { width: 32px; }
.step input { width: 42px; height: 20px; padding: 0 2px; border: 1px solid #e2e3ea; border-top-color: #abadb3; font: inherit; text-align: right; }
.step span { margin-left: 6px; }
.step + p { margin-top: 6px; }
.kind { gap: 3px; margin-top: 5px; line-height: 13px; }
.kind + .kind { margin-top: 12px; }
.generate { width: 100px; margin: 12px 0 0 33px; }
.client footer { gap: 12px; margin-top: 6px; }

/* bottom bars */
.windows { display: flex; align-items: center; height: 21px; padding-left: 2px; border-top: 1px solid #888; border-bottom: 1px solid #888; background: #f0eded; box-shadow: inset 0 1px #fff; }
.windows button { height: 17px; width: 154px; justify-content: flex-start; padding-left: 2px; border: 1px solid #888; border-width: 1px 0 0 1px; background: #fff; }
.status { justify-content: flex-start; height: 19px; padding-top: 1px; border-bottom: 1px solid #3c3030; background: #f0eded; font: 12px/16px Roboto, "Segoe UI", sans-serif; white-space: nowrap; }
.status span { display: flex; align-items: center; gap: 6px; padding-left: 6px; border-right: 1px solid #d0cccc; overflow: hidden; }
.s-code { width: 140px; } .s-reg { width: 300px; } .s-conc { width: 110px; } .s-grade { width: 120px; } .status .s-grade + .s-grade { width: 100px; } .s-res { width: 220px; }
.status .s-reg { padding-left: 7px; }
.status .s-coord { margin-left: auto; margin-right: 22px; padding-right: 7px; }
```
